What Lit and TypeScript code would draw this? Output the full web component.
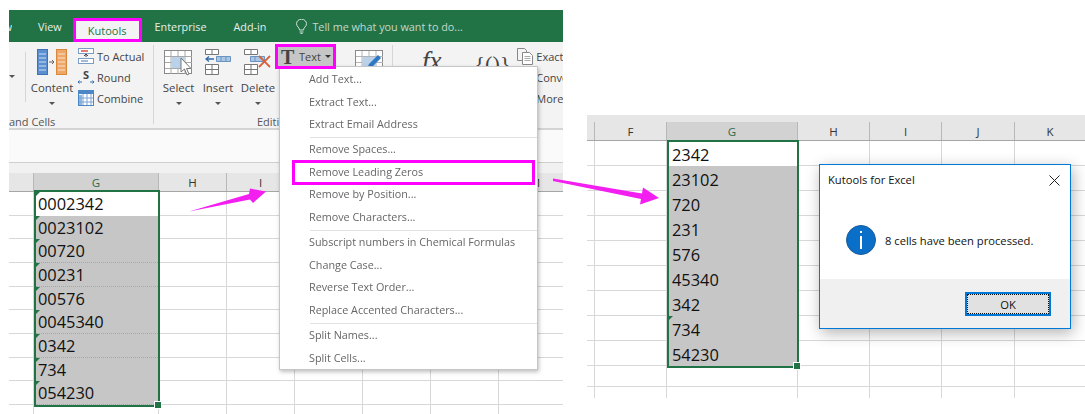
import { LitElement, html, css, svg } from "lit";
import { customElement } from "lit/decorators.js";

const MENU: (string | null)[] = [
  "Add Text...", "Extract Text...", "Extract Email Address", null,
  "Remove Spaces...", "Remove Leading Zeros", "Remove by Position...", "Remove Characters...", null,
  "Subscript numbers in Chemical Formulas", "Change Case...", "Reverse Text Order...", "Replace Accented Characters...", null,
  "Split Names...", "Split Cells...",
];
const LEFT = ["0002342", "0023102", "00720", "00231", "00576", "0045340", "0342", "734", "054230"];
const RIGHT = ["2342", "23102", "720", "231", "576", "45340", "342", "734", "54230"];

const iconContent = html`<svg width="31" height="27" viewBox="0 0 31 27">
  <rect x="0.5" y="0.5" width="10" height="25" fill="#5b8fd0" stroke="#3d72b4"/>
  <path d="M2 5h7M2 9h7M2 13h7M2 17h7M2 21h7" stroke="#cfe0f4"/>
  <rect x="19.5" y="0.5" width="10" height="25" fill="#eda868" stroke="#d8873c"/>
  <path d="M21 5h7M21 9h7M21 13h7M21 17h7M21 21h7" stroke="#fbe3cc"/>
  <path d="M12 13h5M15 11l2 2-2 2" fill="none" stroke="#666"/>
</svg>`;
const iconActual = html`<svg width="16" height="16" viewBox="0 0 16 16">
  <rect x="0.5" y="0.5" width="15" height="5" fill="#fff" stroke="#7a9cc6"/>
  <path d="M3 3h7" stroke="#d9433a" stroke-width="1.4"/>
  <rect x="0.5" y="10.5" width="15" height="5" fill="#fff" stroke="#7a9cc6"/>
  <path d="M3 13h7" stroke="#7a9cc6" stroke-width="1.4"/>
  <path d="M8 6v3M6 8l2-2 2 2" fill="none" stroke="#444"/>
</svg>`;
const iconRound = html`<svg width="16" height="16" viewBox="0 0 16 16">
  <text x="5" y="10" font-family="Open Sans" font-size="11" font-weight="700" fill="#444">S</text>
  <path d="M0 13h4M1.500 11.500L0 13l1.500 1.500M12 13h4M14.500 11.500L16 13l-1.500 1.500" fill="none" stroke="#2f6cb0"/>
</svg>`;
const iconCombine = html`<svg width="16" height="16" viewBox="0 0 16 16">
  <rect x="0.500" y="0.500" width="15" height="15" fill="#fff" stroke="#4b86c6"/>
  <rect x="0" y="0" width="16" height="4" fill="#4b86c6"/>
  <rect x="1" y="5" width="3" height="10" fill="#8db6e0"/>
  <path d="M5 4v11M9 4v11M13 4v11M1 8h14M1 12h14" stroke="#7aa5d3"/>
</svg>`;
const iconSelect = html`<svg width="29" height="26" viewBox="0 0 29 26">
  <rect x="0.500" y="0.500" width="27" height="23" fill="#fff" stroke="#8a8a8a"/>
  <path d="M7 1v23M14 1v23M21 1v23M1 6.500h27M1 12.500h27M1 18.500h27" stroke="#a8a8a8"/>
  <rect x="7.500" y="7" width="13" height="11" fill="#b9d2ea"/>
  <path d="M17 8v14l3.500-3 2.500 6 2-1-2.500-5.500H27z" fill="#fff" stroke="#777"/>
</svg>`;
const iconInsert = html`<svg width="26" height="27" viewBox="0 0 26 27">
  <path d="M0.500 0.500h13v5h-13zM7 0.500v5" fill="#fff" stroke="#777"/>
  <path d="M11.500 7.500h14v5h-14zM16 7.500v5M21 7.500v5" fill="#a9c6e4" stroke="#6a93c0"/>
  <path d="M1 10h8M4 7.500L1 10l3 2.500" fill="none" stroke="#2f6cb0" stroke-width="1.300"/>
  <path d="M0.500 15.500h13v10h-13zM7 15.500v10M0.500 20.500h13" fill="#fff" stroke="#777"/>
</svg>`;
const iconDelete = html`<svg width="28" height="27" viewBox="0 0 28 27">
  <path d="M0.500 0.500h13v5h-13zM7 0.500v5" fill="#fff" stroke="#777"/>
  <path d="M6.500 7.500h14v5h-14zM11 7.500v5" fill="#a9c6e4" stroke="#6a93c0"/>
  <path d="M0.500 15.500h13v10h-13zM7 15.500v10M0.500 20.500h13" fill="#fff" stroke="#777"/>
  <path d="M15 7l11 11M26 7L15 18" stroke="#d8603a" stroke-width="1.800"/>
</svg>`;
const iconTable = html`<svg width="29" height="26" viewBox="0 0 29 26">
  <rect x="0.500" y="0.500" width="27" height="23" fill="#fff" stroke="#8a8a8a"/>
  <path d="M1 6.500h27M1 12.500h27M1 18.500h27M7 1v23M14 1v23M21 1v23" stroke="#b4b4b4"/>
  <rect x="7.500" y="7" width="13" height="11" fill="#b9d2ea"/>
  <path d="M12 19l2-5 9-9 3 3-9 9z" fill="#2f78c4"/>
</svg>`;
const iconCopy = html`<svg width="16" height="17" viewBox="0 0 16 17">
  <path d="M0.500 0.500h7l2 2v10h-9z" fill="#f4f4f4" stroke="#888"/>
  <path d="M5.500 4.500h7l3 3v9h-10z" fill="#fff" stroke="#888"/>
  <path d="M7.500 8.500h6M7.500 10.500h6M7.500 12.500h6" stroke="#aaa"/>
</svg>`;
const bulb = html`<svg width="11" height="15" viewBox="0 0 11 15">
  <path d="M3.500 11c0-2.500-3-3.500-3-6.300A5 4.500 0 0 1 10.500 4.700c0 2.800-3 3.800-3 6.300z" fill="none" stroke="#cfe0d6"/>
  <path d="M3.500 13h4M4.500 14.500h2" stroke="#cfe0d6"/>
</svg>`;

@customElement("sheet-grid")
class SheetGrid extends LitElement {
  static properties = { variant: {} };
  variant = "left";
  static styles = css`
    :host { display: block; position: relative; font-family: "Open Sans", sans-serif; }
    .head { display: grid; background: #e6e6e6; border-bottom: 1px solid #a6a6a6; box-sizing: border-box; color: #333; }
    .head div { display: flex; align-items: center; justify-content: center; border-right: 1px solid #b8b8b8; font-size: 11.500px; }
    .head .on { background: #d2d2d2; color: #2f6b4c; }
    .head div:last-child { border-right: none; }
    .left .head div:last-child { padding-left: 4px; }
    .row { display: grid; box-sizing: border-box; border-bottom: 1px solid #d8d8d8; }
    .row.tail { border-bottom: none; }
    .row > div { border-right: 1px solid #d8d8d8; }
    .row > div:last-child { border-right: none; }
    .row > .g { background: #c6c6c6; color: #111; display: flex; align-items: center; font-size: 16.400px; position: relative; margin: 0 1px -1px 2px; border-right: none; border-bottom: 1px solid #a6a6a6; box-sizing: border-box; }
    .left .row > .g { border-bottom-style: dotted; padding-left: 2px; }
    .right .row > .g { padding-left: 3px; padding-top: 2px; }
    .row > .g.w, .left .row > .g.w { background: #fff; border-bottom: none; }
    .tri { position: absolute; left: 0; top: 0; width: 0; height: 0; border-top: 4px solid #217346; border-right: 4px solid transparent; }
    .sel { position: absolute; box-sizing: border-box; border: 2px solid #217346; pointer-events: none; }
    .handle { position: absolute; right: -4px; bottom: -4px; width: 6px; height: 6px; background: #217346; border: 1px solid #fff; }
  `;
  render() {
    const left = this.variant === "left";
    const cols = left ? "25px 125px 68px 68px 68px 68px 68px 68px" : "8px 72px 131px 72px 72px 73px 70px";
    const gIdx = left ? 1 : 2;
    const heads = left ? ["", "G", "H", "I", "J", "K", "L", "M"] : ["", "F", "G", "H", "I", "J", "K"];
    const count = heads.length;
    const data = left ? LEFT : RIGHT;
    const rh = left ? 23.670 : 25;
    const style = `grid-template-columns:${cols}`;
    const blank = (h: number, cls = "row") => html`<div class=${cls} style="${style};height:${h}px">${Array.from({ length: count }, () => html`<div></div>`)}</div>`;
    return html`<div class=${this.variant}>
      <div class="head" style="${style};height:19px">
        ${heads.map((h, i) => html`<div class=${i === gIdx ? "on" : ""}>${h}</div>`)}
      </div>
      ${data.map((v, r) => html`<div class="row" style="${style};height:${rh}px">
        ${Array.from({ length: count }, (_, i) =>
          i === gIdx
            ? html`<div class="g ${r === 0 ? "w" : ""}">${left || r === 7 ? html`<span class="tri"></span>` : ""}${v}</div>`
            : html`<div></div>`)}
      </div>`)}
      ${left ? blank(9, "row tail") : html`${blank(21)}${blank(11, "row tail")}`}
      <div class="sel" style=${left ? "left:25px;top:17px;width:126px;height:217px" : "left:80px;top:18px;width:132px;height:228px"}><span class="handle"></span></div>
    </div>`;
  }
}

@customElement("app-root")
class AppRoot extends LitElement {
  static styles = css`
    :host { display: block; width: 1085px; height: 414px; background: #fff; font-family: "Open Sans", sans-serif; overflow: hidden; position: relative; }
    .stage { display: flex; gap: 24px; padding-left: 9px; height: 414px; }
    .excel { width: 554px; height: 404px; margin-top: 10px; position: relative; flex: none; overflow: hidden; filter: blur(0.350px); }
    .tabs { height: 32px; background: #217346; color: #e6efe9; font-size: 10.800px; display: flex; align-items: center; white-space: nowrap; box-sizing: border-box; }
    .clip { width: 3px; overflow: hidden; direction: rtl; }
    .view { margin-left: 26px; }
    .kt { margin-left: 11px; width: 69px; height: 24px; margin-top: 8px; box-sizing: border-box; border: 3px solid #f0f; background: #f3f3f3; color: #217346; display: flex; align-items: center; justify-content: center; font-size: 11px; }
    .ent { margin-left: 13px; }
    .add { margin-left: 27px; }
    .bulb { margin-left: 30px; display: flex; }
    .tell { margin-left: 5px; color: #c4d8cc; }

    .ribbon { height: 86px; background: #f3f3f3; display: flex; border-bottom: 2px solid #d4d4d4; color: #444; font-size: 11px; }
    .grp { position: relative; border-right: 1px solid #d6d6d6; margin: 3px 0 4px; box-sizing: border-box; display: flex; align-items: flex-start; flex: none; }
    .grp.one { width: 145px; }
    .grp.two { width: 239px; }
    .grp.three { flex: 1; min-width: 0; border-right: none; }
    .grp-label { position: absolute; bottom: -6px; line-height: 16px; white-space: nowrap; color: #555; }
    .big { display: flex; flex-direction: column; align-items: center; white-space: nowrap; line-height: 16px; }
    .big svg { display: block; }
    .caret { width: 0; height: 0; border-left: 3px solid transparent; border-right: 3px solid transparent; border-top: 3px solid #555; }
    .big .lbl { margin-top: 4px; font-size: 11.400px; }
    .big .caret { margin-top: 6px; }
    .sep { width: 1px; height: 50px; background: #d6d6d6; margin-top: 7px; }
    .stack { display: flex; flex-direction: column; gap: 5px; margin-top: 3px; }
    .small { display: flex; align-items: center; gap: 3px; height: 16px; white-space: nowrap; }
    .textbtn { position: relative; z-index: 3; margin-left: 3px; margin-top: -1px; width: 61px; height: 25px; box-sizing: border-box; border: 3px solid #f0f; background: #c6c6c6; display: flex; align-items: center; padding-left: 3px; gap: 4px; font-size: 11px; color: #444; }
    .bigT { font-family: "Liberation Serif", serif; font-weight: 700; font-size: 20px; line-height: 20px; color: #444; width: 14px; }
    .textbtn .caret { border-top-color: #333; }
    .fx { font-family: "Liberation Serif", serif; font-style: italic; font-size: 27px; line-height: 30px; color: #444; }
    .brace { font-family: "Liberation Serif", serif; font-size: 22px; line-height: 30px; color: #444; }

    .fbar { height: 33px; background: #fafafa; border-bottom: 1px solid #cfcfcf; box-sizing: border-box; }
    .strip { height: 10px; background: #f1f1f1; }

    .menu { position: absolute; z-index: 2; left: 270px; top: 56px; width: 259px; height: 304px; box-sizing: border-box; background: #fff; border: 1px solid #c6c6c6; box-shadow: 1px 2px 4px rgba(0,0,0,.25); padding-top: 1px; color: #666; font-size: 10.800px; }
    .item { height: 22.600px; line-height: 22.600px; padding-left: 29px; white-space: nowrap; }
    .msep { background: #e2e2e2; margin: 1px 0 0 30px; height: 1.500px; }
    .hl { position: absolute; z-index: 3; left: 283px; top: 150px; width: 243px; height: 25px; box-sizing: border-box; border: 3px solid #f0f; }

    .right { width: 498px; height: 283px; margin-top: 115px; flex: none; position: relative; }
    .top7 { height: 7px; background: #e6e6e6; }
    .dialog { position: absolute; left: 232px; top: 49px; width: 252px; height: 165px; box-sizing: border-box; background: #fff; border: 1px solid #0078d7; box-shadow: 2px 4px 14px rgba(0,0,0,.3); display: flex; flex-direction: column; color: #111; font-size: 11.200px; }
    .dtitle { display: flex; justify-content: space-between; padding: 7px 10px 0 8px; height: 47px; box-sizing: border-box; line-height: 16px; }
    .dbody { display: flex; align-items: center; gap: 9px; padding-left: 26px; height: 67px; box-sizing: border-box; padding-bottom: 11px; }
    .dfoot { flex: 1; background: #f0f0f0; display: flex; justify-content: flex-end; padding: 13px 19px 0 0; }
    .ok { width: 86px; height: 24px; box-sizing: border-box; border: 2px solid #0078d7; background: #e1e1e1; outline: 1px dotted #111; outline-offset: -3px; display: flex; align-items: center; justify-content: center; }
    .arrows { position: absolute; left: 0; top: 0; z-index: 5; pointer-events: none; }
  `;

  render() {
    return html`<div class="stage">
      <section class="excel">
        <div class="tabs">
          <span class="clip">w</span>
          <span class="view">View</span>
          <span class="kt">Kutools</span>
          <span class="ent">Enterprise</span>
          <span class="add">Add-in</span>
          <span class="bulb">${bulb}</span>
          <span class="tell">Tell me what you want to do...</span>
        </div>
        <div class="ribbon">
          <div class="grp one">
            <span class="caret" style="margin:30px 0 0 0"></span>
            <div class="sep" style="margin-left:10px"></div>
            <div class="big" style="margin:4px 0 0 6px;width:40px">${iconContent}<span class="lbl">Content</span><span class="caret"></span></div>
            <div class="stack" style="margin-left:6px">
              <div class="small">${iconActual}To Actual</div>
              <div class="small">${iconRound}Round</div>
              <div class="small">${iconCombine}Combine</div>
            </div>
            <span class="grp-label" style="left:0">and Cells</span>
          </div>
          <div class="grp two">
            <div class="big" style="margin:5px 0 0 10px;width:29px">${iconSelect}<span class="lbl">Select</span><span class="caret"></span></div>
            <div class="big" style="margin:4px 0 0 12px;width:26px">${iconInsert}<span class="lbl">Insert</span><span class="caret"></span></div>
            <div class="big" style="margin:4px 0 0 13px;width:28px">${iconDelete}<span class="lbl">Delete</span><span class="caret"></span></div>
            <div class="textbtn"><span class="bigT">T</span>Text<span class="caret"></span></div>
            <div class="big" style="margin:5px 0 0 19px">${iconTable}</div>
            <span class="grp-label" style="left:103px">Editing</span>
          </div>
          <div class="grp three">
            <span class="fx" style="margin:1px 0 0 29px">fx</span>
            <span class="brace" style="margin:4px 0 0 33px">{()}</span>
            <div class="stack" style="margin-left:7px">
              <div class="small">${iconCopy}Exact</div>
              <div class="small" style="margin-left:19px">Conve</div>
              <div class="small" style="margin-left:19px">More</div>
            </div>
          </div>
        </div>
        <div class="fbar"></div>
        <div class="strip"></div>
        <sheet-grid variant="left"></sheet-grid>
        <div class="menu">
          ${MENU.map((m) => m === null ? html`<div class="msep"></div>` : html`<div class="item">${m}</div>`)}
        </div>
        <div class="hl"></div>
      </section>
      <section class="right">
        <div class="top7"></div>
        <sheet-grid variant="right"></sheet-grid>
        <div class="dialog">
          <div class="dtitle"><span>Kutools for Excel</span>
            <svg width="11" height="11" viewBox="0 0 11 11" style="margin-top:3px"><path d="M0.500 0.500l10 10M10.500 0.500l-10 10" stroke="#222" fill="none"/></svg>
          </div>
          <div class="dbody">
            <svg width="30" height="30" viewBox="0 0 30 30"><circle cx="15" cy="15" r="14.500" fill="#0a6fc8" stroke="#1d5a96"/><rect x="14" y="6" width="2" height="2" fill="#fff"/><rect x="14" y="11" width="2" height="13" fill="#fff"/></svg>
            <span>8 cells have been processed.</span>
          </div>
          <div class="dfoot"><div class="ok">OK</div></div>
        </div>
      </section>
    </div>
    <svg class="arrows" width="1085" height="414" viewBox="0 0 1085 414">
      ${svg`<polygon points="189,211.500 249,194 250,188.500 266,191.500 253,203 250,199.500" fill="#f31ef0"/>
      <polygon points="553,178.500 642,193.500 643,187.500 659,198 640,204.500 641,199 553,181" fill="#f31ef0"/>`}
    </svg>`;
  }
}
